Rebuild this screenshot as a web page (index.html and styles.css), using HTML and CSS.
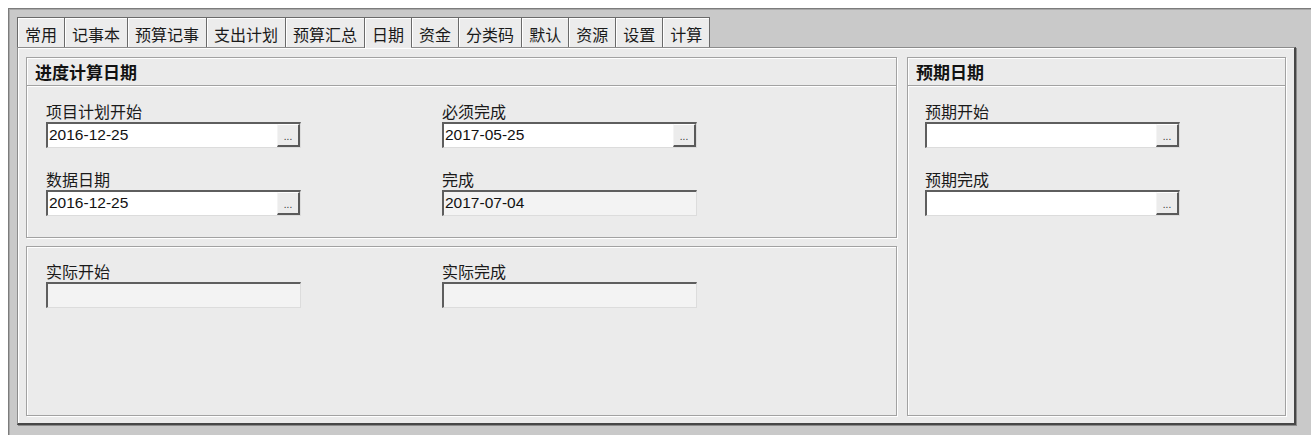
FILE: index.html
```html
<!DOCTYPE html>
<html lang="zh-CN">
<head>
  <meta charset="UTF-8" />
  <title>日期</title>
  <link rel="stylesheet" href="styles.css">
</head>
<body>

<div class="frame">
  <!-- tab strip -->
  <div class="tabs">
    <span class="tab">常用</span>
    <span class="tab">记事本</span>
    <span class="tab">预算记事</span>
    <span class="tab">支出计划</span>
    <span class="tab">预算汇总</span>
    <span class="tab active">日期</span>
    <span class="tab">资金</span>
    <span class="tab">分类码</span>
    <span class="tab">默认</span>
    <span class="tab">资源</span>
    <span class="tab">设置</span>
    <span class="tab last">计算</span>
  </div>

  <div class="panel">
    <div class="col-left">
      <div class="group group-sched">
        <div class="group-head">进度计算日期</div>
        <div class="fields">
          <div class="field">
            <label>项目计划开始</label>
            <div class="box"><span class="val">2016-12-25</span><span class="pick">...</span></div>
          </div>
          <div class="field">
            <label>必须完成</label>
            <div class="box"><span class="val">2017-05-25</span><span class="pick">...</span></div>
          </div>
          <div class="field">
            <label>数据日期</label>
            <div class="box"><span class="val">2016-12-25</span><span class="pick">...</span></div>
          </div>
          <div class="field">
            <label>完成</label>
            <div class="box off"><span class="val">2017-07-04</span></div>
          </div>
        </div>
      </div>

      <div class="group group-actual">
        <div class="fields top-gap">
          <div class="field">
            <label>实际开始</label>
            <div class="box off"><span class="val"></span></div>
          </div>
          <div class="field">
            <label>实际完成</label>
            <div class="box off"><span class="val"></span></div>
          </div>
        </div>
      </div>
    </div>

    <div class="group group-exp">
      <div class="group-head">预期日期</div>
      <div class="fields single">
        <div class="field">
          <label>预期开始</label>
          <div class="box"><span class="val"></span><span class="pick">...</span></div>
        </div>
        <div class="field">
          <label>预期完成</label>
          <div class="box"><span class="val"></span><span class="pick">...</span></div>
        </div>
      </div>
    </div>
  </div>
</div>

</body>
</html>
```

FILE: styles.css
```css
* {
  margin: 0;
  padding: 0;
  box-sizing: border-box;
}

html, body {
  height: 100%;
  overflow: hidden;
}

body {
  background: #ffffff;
  font-family: "Noto Sans CJK SC", "Liberation Sans", sans-serif;
  color: #1a1a1a;
}

.frame {
  margin: 8px 0 0 8px;
  height: calc(100vh - 8px);
  background: #c9c9c9;
  border-top: 1px solid #7c7c7c;
  border-left: 1px solid #7c7c7c;
  box-shadow: inset 1px 1px 0 #a8a8a8;
  padding: 8px 0 0 8px;
}

/* tabs */
.tabs {
  display: flex;
  align-items: flex-start;
  height: 30px;
}

.tab {
  display: block;
  height: 30px;
  padding: 3px 7px 0;
  font-size: 16px;
  line-height: 26px;
  background: #ececec;
  border-top: 1px solid #6a6a6a;
  border-left: 1px solid #6a6a6a;
  box-shadow: inset 1px 1px 0 #ffffff;
  white-space: nowrap;
}

.tab.last {
  border-right: 1px solid #6a6a6a;
}

.tab.active {
  position: relative;
  z-index: 1;
  height: 31px;
  margin-bottom: -1px;
  background: #ebebeb;
}

/* panel */
.panel {
  width: 1279px;
  height: 378px;
  background: #ebebeb;
  border-style: solid;
  border-width: 1px 2px 2px 1px;
  border-color: #8c8c8c #474747 #474747 #8c8c8c;
  box-shadow: inset 1px 1px 0 #ffffff, 1px 1px 0 #8a8a8a;
  padding: 9px 8px 7px 8px;
  display: grid;
  grid-template-columns: 871px 379px;
  column-gap: 10px;
}

.col-left {
  display: flex;
  flex-direction: column;
  gap: 8px;
}

.group {
  border: 1px solid #a2a2a2;
  box-shadow: inset 1px 1px 0 #ffffff, 1px 1px 0 #ffffff;
}

.group-sched {
  height: 181px;
}

.group-actual {
  flex: 1;
}

.group-head {
  height: 28px;
  padding-left: 8px;
  font-size: 17px;
  font-weight: bold;
  line-height: 28px;
  color: #111;
  border-bottom: 1px solid #a2a2a2;
  box-shadow: 0 1px 0 #ffffff;
}

/* fields */
.fields {
  display: grid;
  grid-template-columns: 255px 255px;
  column-gap: 141px;
  row-gap: 22px;
  padding: 16px 0 0 19px;
}

.fields.top-gap {
  padding-top: 15px;
}

.fields.single {
  grid-template-columns: 255px;
  padding-left: 17px;
}

.field label {
  display: block;
  font-size: 16px;
  line-height: 18px;
  margin-bottom: 2px;
}

.box {
  display: flex;
  height: 26px;
  background: #ffffff;
  border-style: solid;
  border-width: 2px 1px 1px 2px;
  border-color: #5e5e5e #dcdcdc #dcdcdc #5e5e5e;
}

.box.off {
  background: #f3f3f3;
}

.val {
  flex: 1;
  padding-left: 1px;
  font-family: "Liberation Sans", sans-serif;
  font-size: 15.5px;
  line-height: 22px;
  color: #111;
}

.pick {
  width: 23px;
  height: 23px;
  background: #ececec;
  border-style: solid;
  border-width: 1px 2px 2px 1px;
  border-color: #ffffff #5a5a5a #5a5a5a #f4f4f4;
  font-family: "Liberation Sans", sans-serif;
  font-size: 10px;
  line-height: 24px;
  text-align: center;
  color: #333;
}
```
